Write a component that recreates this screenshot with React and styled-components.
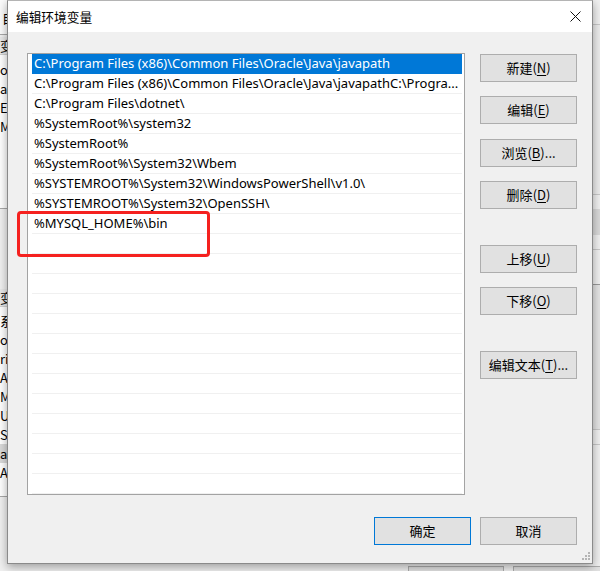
import React from "react";
import styled, { createGlobalStyle } from "styled-components";

const Global = createGlobalStyle`
  html, body { margin: 0; padding: 0; }
  body {
    width: 600px;
    height: 571px;
    overflow: hidden;
    background: #f0f0f0;
    font-family: "Noto Sans", "Noto Sans CJK SC", sans-serif;
  }
`;

const UI_FONT = `"Noto Sans", "Noto Sans CJK SC", sans-serif`;
const CJK_FONT = `"Noto Sans CJK SC", "Noto Sans", sans-serif`;

const Screen = styled.div`
  position: relative;
  width: 600px;
  height: 571px;
  overflow: hidden;
`;

/* ---------- background window (only slivers visible) ---------- */
const BackWindow = styled.div`
  position: absolute;
  inset: 0;
  display: grid;
  grid-template-columns: 8px 1fr 8px;
  grid-template-rows: 1fr 8px;
  background: #f0f0f0;
`;

const Strip = styled.div`
  display: flex;
  flex-direction: column;
  overflow: hidden;
  background: #f0f0f0;
`;

const Block = styled.div`
  flex: none;
  height: ${(p) => p.$h}px;
  box-sizing: border-box;
  background: ${(p) => p.$bg || "#f0f0f0"};
  border-bottom: ${(p) => (p.$line ? `1px solid ${p.$line}` : "none")};
  font-family: ${CJK_FONT};
  font-size: 13px;
  line-height: ${(p) => p.$h}px;
  color: #000;
  white-space: nowrap;
  padding-left: ${(p) => p.$pl || 0}px;
  overflow: hidden;
`;

const BackFooter = styled.div`
  grid-column: 1 / 4;
  display: flex;
  gap: 9px;
  padding-left: 408px;
  overflow: hidden;
  background: #f0f0f0;
`;

const BackButton = styled.div`
  flex: none;
  width: 96px;
  height: 28px;
  margin-top: 3px;
  box-sizing: border-box;
  background: #e1e1e1;
  border: 1px solid #adadad;
`;

/* ---------- dialog ---------- */
const Dialog = styled.div`
  position: absolute;
  left: 7px;
  top: 0;
  width: 586px;
  height: 564px;
  box-sizing: border-box;
  border: 1px solid #8a8a8a;
  border-top-color: #b4b4b4;
  background: #f0f0f0;
  box-shadow: 0 3px 9px rgba(0, 0, 0, 0.35);
  display: flex;
  flex-direction: column;
`;

const TitleBar = styled.div`
  flex: none;
  height: 31px;
  background: #fff;
  display: flex;
  align-items: center;
  justify-content: space-between;
  padding-left: 8px;
`;

const Title = styled.span`
  font-family: ${CJK_FONT};
  font-size: 12.7px;
  color: #000;
`;

const Close = styled.svg`
  width: 11px;
  height: 11px;
  margin-right: 11px;
`;

const Body = styled.div`
  flex: 1;
  display: flex;
  flex-direction: column;
  padding: 21px 15px 18px 19px;
`;

const Main = styled.div`
  display: flex;
  gap: 15px;
`;

const ListBox = styled.div`
  width: 438px;
  height: 442px;
  box-sizing: border-box;
  border: 1px solid #a3a3a3;
  background: #fff;
  padding: 0 2px 0 4px;
  overflow: hidden;
`;

const Row = styled.div`
  height: 20px;
  box-sizing: border-box;
  border-bottom: 1px solid ${(p) => (p.$selected ? "#0078d7" : "#f0f0f0")};
  background: ${(p) => (p.$selected ? "#0078d7" : "transparent")};
  color: ${(p) => (p.$selected ? "#fff" : "#000")};
  font-family: ${UI_FONT};
  font-size: 13px;
  line-height: 19px;
  padding-left: 2px;
  white-space: nowrap;
  overflow: hidden;
  text-overflow: ellipsis;
`;

const SideColumn = styled.div`
  display: flex;
  flex-direction: column;
  width: 97px;
`;

const Button = styled.div`
  flex: none;
  width: 97px;
  height: 28px;
  margin-top: ${(p) => p.$mt || 0}px;
  box-sizing: border-box;
  background: #e1e1e1;
  border: 1px solid ${(p) => (p.$default ? "#0078d7" : "#adadad")};
  font-family: ${CJK_FONT};
  font-size: 13px;
  color: #000;
  display: flex;
  align-items: center;
  justify-content: center;
  padding-bottom: 1px;
`;

const Key = styled.span`
  text-decoration: underline;
  text-underline-offset: 2px;
`;

const Footer = styled.div`
  display: flex;
  justify-content: flex-end;
  gap: 9px;
  margin-top: 22px;
`;

const Grip = styled.svg`
  position: absolute;
  right: 2px;
  bottom: 3px;
  width: 8px;
  height: 8px;
`;

const Annotation = styled.div`
  position: absolute;
  left: 17px;
  top: 211px;
  width: 193px;
  height: 46px;
  box-sizing: border-box;
  border: 3px solid #f5211f;
  border-radius: 4px;
`;

const paths = [
  "C:\\Program Files (x86)\\Common Files\\Oracle\\Java\\javapath",
  "C:\\Program Files (x86)\\Common Files\\Oracle\\Java\\javapathC:\\Progra...",
  "C:\\Program Files\\dotnet\\",
  "%SystemRoot%\\system32",
  "%SystemRoot%",
  "%SystemRoot%\\System32\\Wbem",
  "%SYSTEMROOT%\\System32\\WindowsPowerShell\\v1.0\\",
  "%SYSTEMROOT%\\System32\\OpenSSH\\",
  "%MYSQL_HOME%\\bin",
];

const rows = [...paths, ...Array(13).fill("")];

const sideButtons = [
  { label: "新建", key: "N", mt: 1 },
  { label: "编辑", key: "E", mt: 14 },
  { label: "浏览", key: "B", mt: 15, dots: true },
  { label: "删除", key: "D", mt: 14 },
  { label: "上移", key: "U", mt: 36 },
  { label: "下移", key: "O", mt: 14 },
  { label: "编辑文本", key: "T", mt: 36, dots: true },
];

const leftTopRows = ["on", "at", "El", "M"];
const leftBottomRows = ["系", "o", "ri", "AV", "MY", "U", "S", "a", "A"];

export default function App() {
  return (
    <Screen>
      <Global />
      <BackWindow>
        <Strip>
          <Block $h={35} $bg="#fbfbfb" $line="#a8a8a8" $pl={2}>
            自
          </Block>
          <Block $h={2} />
          <Block $h={18} $bg="#e8e8e8" $line="#d0d0d0">
            变
          </Block>
          <Block $h={5} $bg="#fff" />
          {leftTopRows.map((t) => (
            <Block key={t} $h={19} $bg="#fff">
              {t}
            </Block>
          ))}
          <Block $h={73} $bg="#fff" $line="#a8a8a8" />
          <Block $h={80} />
          <Block $h={18} $bg="#e8e8e8" $line="#d0d0d0">
            变
          </Block>
          <Block $h={4} $bg="#fff" />
          {leftBottomRows.map((t, i) => (
            <Block key={t + i} $h={19} $bg={t === "a" ? "#d9d9d9" : "#fff"}>
              {t}
            </Block>
          ))}
          <Block $h={15} $bg="#fff" $line="#a8a8a8" />
        </Strip>
        <div />
        <Strip>
          <Block $h={25} $line="#c8c8c8" />
          <Block $h={170} $bg="#ececec" $line="#c8c8c8" />
          <Block $h={14} />
          <Block $h={26} $bg="#d9d9d9" />
          <Block $h={15} $line="#c8c8c8" />
          <Block $h={35} $line="#9a9a9a" />
          <Block $h={145} $bg="#e4e4e4" $line="#c8c8c8" />
          <Block $h={15} $line="#c8c8c8" />
          <Block $h={100} />
        </Strip>
        <BackFooter>
          <BackButton />
          <BackButton />
        </BackFooter>
      </BackWindow>

      <Dialog>
        <TitleBar>
          <Title>编辑环境变量</Title>
          <Close viewBox="0 0 11 11">
            <path d="M0.5 0.5 L10.5 10.5 M10.5 0.5 L0.5 10.5" stroke="#111" strokeWidth="1" fill="none" />
          </Close>
        </TitleBar>
        <Body>
          <Main>
            <ListBox>
              {rows.map((r, i) => (
                <Row key={i} $selected={i === 0}>
                  {r || "\u00a0"}
                </Row>
              ))}
            </ListBox>
            <SideColumn>
              {sideButtons.map((b) => (
                <Button key={b.key} $mt={b.mt}>
                  {b.label}(<Key>{b.key}</Key>){b.dots ? "..." : ""}
                </Button>
              ))}
            </SideColumn>
          </Main>
          <Footer>
            <Button $default>确定</Button>
            <Button>取消</Button>
          </Footer>
        </Body>
        <Grip viewBox="0 0 8 8">
          <rect x="6" y="0" width="2" height="2" fill="#b5b5b5" />
          <rect x="3" y="3" width="2" height="2" fill="#b5b5b5" />
          <rect x="6" y="3" width="2" height="2" fill="#b5b5b5" />
          <rect x="0" y="6" width="2" height="2" fill="#b5b5b5" />
          <rect x="3" y="6" width="2" height="2" fill="#b5b5b5" />
          <rect x="6" y="6" width="2" height="2" fill="#b5b5b5" />
        </Grip>
      </Dialog>
      <Annotation />
    </Screen>
  );
}
